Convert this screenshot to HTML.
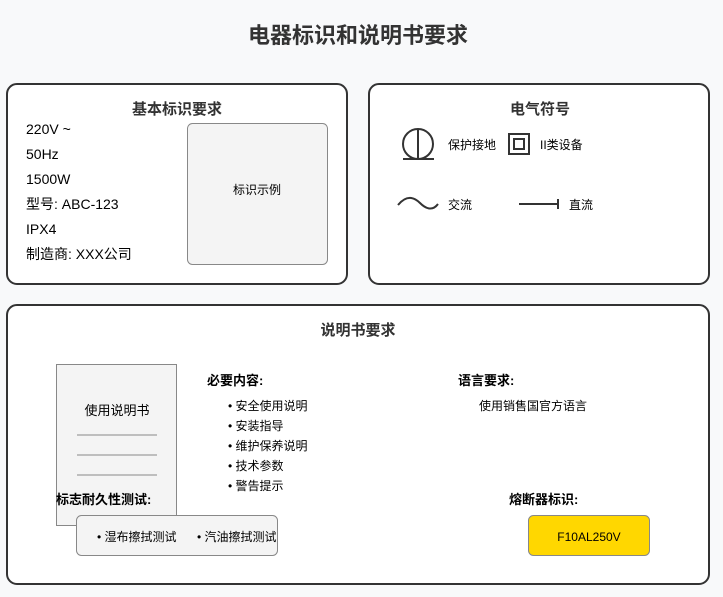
<!DOCTYPE html>
<html><head><meta charset="utf-8"><style>
html,body{margin:0;padding:0;background:#f8f9fa;}
svg{display:block;font-family:"Liberation Sans","Noto Sans CJK SC",sans-serif;}
</style></head><body>
<svg width="723" height="597" viewBox="0 0 723 597" xmlns="http://www.w3.org/2000/svg">
<rect width="723" height="597" fill="#f8f9fa"/>
<text x="358" y="43" text-anchor="middle" font-size="22" font-weight="bold" fill="#333">电器标识和说明书要求</text>

<rect x="7" y="84" width="340" height="200" rx="10" fill="#fff" stroke="#333" stroke-width="2"/>
<rect x="369" y="84" width="340" height="200" rx="10" fill="#fff" stroke="#333" stroke-width="2"/>
<rect x="7" y="305" width="702" height="279" rx="10" fill="#fff" stroke="#333" stroke-width="2"/>

<g font-size="15" font-weight="bold" fill="#333" text-anchor="middle">
<text x="177" y="114">基本标识要求</text>
<text x="540" y="114">电气符号</text>
<text x="358" y="335">说明书要求</text>
</g>

<g font-size="14" fill="#000">
<text x="26" y="134">220V ~</text>
<text x="26" y="159">50Hz</text>
<text x="26" y="184">1500W</text>
<text x="26" y="209">型号: ABC-123</text>
<text x="26" y="234">IPX4</text>
<text x="26" y="259">制造商: XXX公司</text>
</g>
<rect x="187.5" y="123.5" width="140" height="141" rx="5" fill="#f4f4f4" stroke="#888"/>
<text x="257" y="194" text-anchor="middle" font-size="12">标识示例</text>

<g stroke="#333" stroke-width="2" fill="none">
<circle cx="418" cy="144" r="15"/>
<line x1="418" y1="129" x2="418" y2="159"/>
<line x1="403" y1="159" x2="434" y2="159"/>
<rect x="509" y="134" width="20" height="20"/>
<rect x="514" y="139" width="10" height="10"/>
<path d="M398 205 C408 193 416 199 420 203 C425 208 432 212 438 204"/>
<line x1="519" y1="204" x2="558" y2="204"/>
<line x1="558" y1="199" x2="558" y2="209"/>
</g>
<g font-size="12" fill="#000">
<text x="448" y="149">保护接地</text>
<text x="540" y="149">II类设备</text>
<text x="448" y="209">交流</text>
<text x="569" y="209">直流</text>
</g>

<rect x="56.5" y="364.5" width="120" height="161" fill="#f4f4f4" stroke="#888"/>
<text x="117" y="415" text-anchor="middle" font-size="13">使用说明书</text>
<g stroke="#888" stroke-width="1"><line x1="77" y1="435" x2="157" y2="435"/><line x1="77" y1="455" x2="157" y2="455"/><line x1="77" y1="475" x2="157" y2="475"/></g>

<g font-size="13" font-weight="bold" fill="#000">
<text x="207" y="385">必要内容:</text>
<text x="458" y="385">语言要求:</text>
<text x="56" y="504">标志耐久性测试:</text>
<text x="509" y="504">熔断器标识:</text>
</g>
<g font-size="12" fill="#000">
<text x="228" y="410">• 安全使用说明</text>
<text x="228" y="430">• 安装指导</text>
<text x="228" y="450">• 维护保养说明</text>
<text x="228" y="470">• 技术参数</text>
<text x="228" y="490">• 警告提示</text>
<text x="479" y="410">使用销售国官方语言</text>
</g>
<rect x="76.5" y="515.5" width="201" height="40" rx="5" fill="#f4f4f4" stroke="#888"/>
<g font-size="12"><text x="97" y="541">• 湿布擦拭测试</text><text x="197" y="541">• 汽油擦拭测试</text></g>
<rect x="528.5" y="515.5" width="121" height="40" rx="5" fill="#ffd700" stroke="#888"/>
<text x="589" y="541" text-anchor="middle" font-size="12">F10AL250V</text>
</svg>
</body></html>
